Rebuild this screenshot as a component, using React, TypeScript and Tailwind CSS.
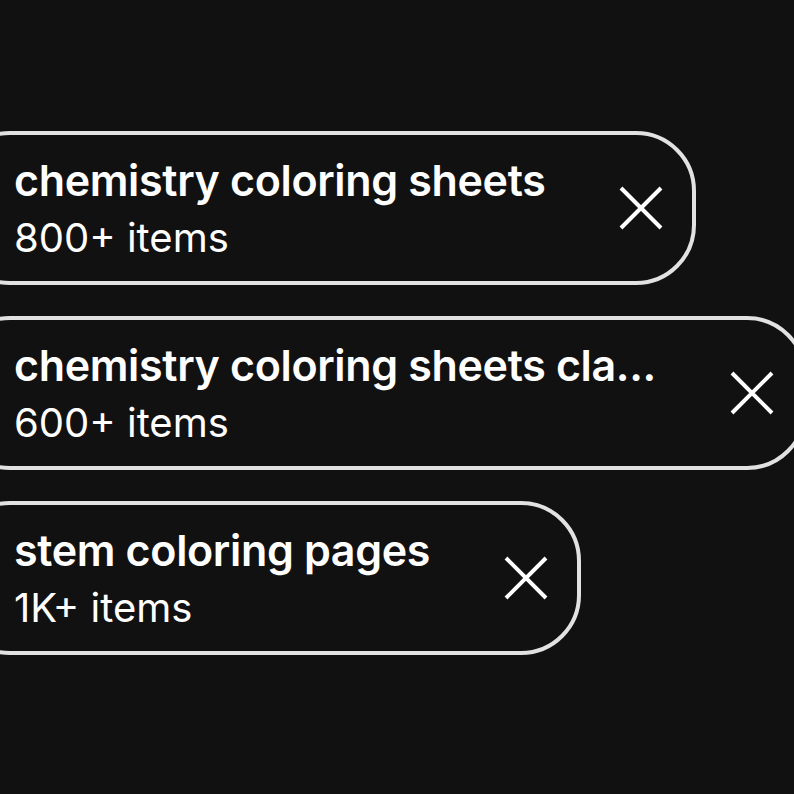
const chips = [
  { title: "chemistry coloring sheets", count: "800+ items" },
  { title: "chemistry coloring sheets cla...", count: "600+ items" },
  { title: "stem coloring pages", count: "1K+ items" },
];

function CloseIcon() {
  return (
    <svg width="44" height="44" viewBox="0 0 44 44" fill="none" className="shrink-0">
      <path d="M2 2 L42 42 M42 2 L2 42" stroke="#ffffff" strokeWidth="4" />
    </svg>
  );
}

export default function App() {
  return (
    <div
      className="w-[794px] h-[794px] overflow-hidden bg-[#111111] pt-[131px] flex flex-col gap-[31px] items-start"
      style={{ fontFamily: "Inter, 'Noto Sans', sans-serif" }}
    >
      {chips.map((c) => (
        <div
          key={c.title}
          className="ml-[-50px] h-[154px] shrink-0 flex items-center border-4 border-[#e2e2e2] rounded-[60px] pl-[60px] pr-[29px]"
        >
          <div className="flex flex-col pt-[4px]">
            <div className="text-white text-[43px] font-semibold leading-[52px] whitespace-nowrap tracking-[-0.35px]">
              {c.title}
            </div>
            <div className="text-white text-[40px] font-normal leading-[56px] whitespace-nowrap pt-[4px]">
              {c.count}
            </div>
          </div>
          <div className="ml-[74px]">
            <CloseIcon />
          </div>
        </div>
      ))}
    </div>
  );
}
